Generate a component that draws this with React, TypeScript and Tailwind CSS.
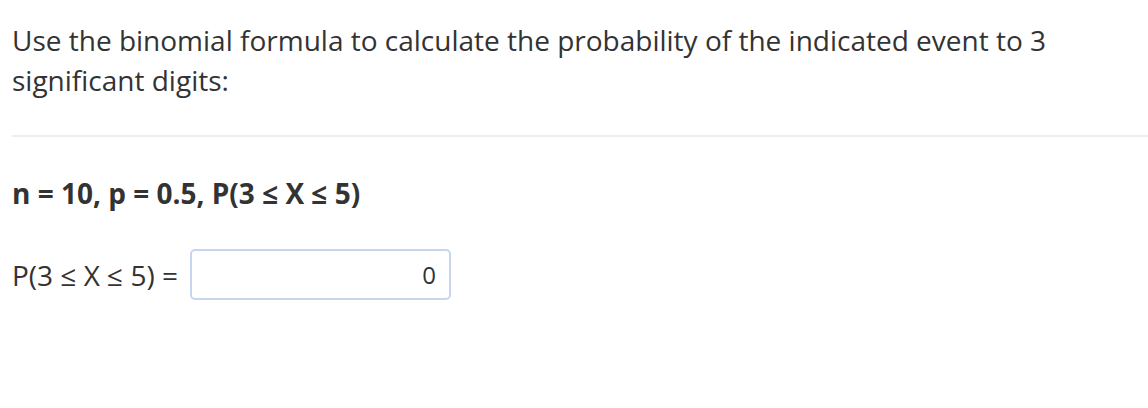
import React from "react";

export default function App() {
  return (
    <div className="w-[1148px] h-[408px] bg-white overflow-hidden text-[#333]" style={{ fontFamily: '"Open Sans", sans-serif' }}>
      <div className="pl-[12px] pt-[20px]">
        <p className="text-[28px] leading-[40px] pr-[40px]">
          Use the binomial formula to calculate the probability of the indicated event to 3 significant digits:
        </p>
        <div className="mt-[35px] h-[2px] bg-[#eeeeee]" />
        <p className="mt-[36px] text-[28px] leading-[40px] font-bold">n = 10, p = 0.5, P(3 ≤ X ≤ 5)</p>
        <div className="mt-[36px] flex items-center gap-[12px]">
          <span className="text-[28px] leading-[40px]">P(3 ≤ X ≤ 5) =</span>
          <div className="w-[261px] h-[51px] border-2 border-[#c6d6ee] rounded-[5px] flex items-center justify-end pr-[13px] text-[24px]">
            0
          </div>
        </div>
      </div>
    </div>
  );
}
